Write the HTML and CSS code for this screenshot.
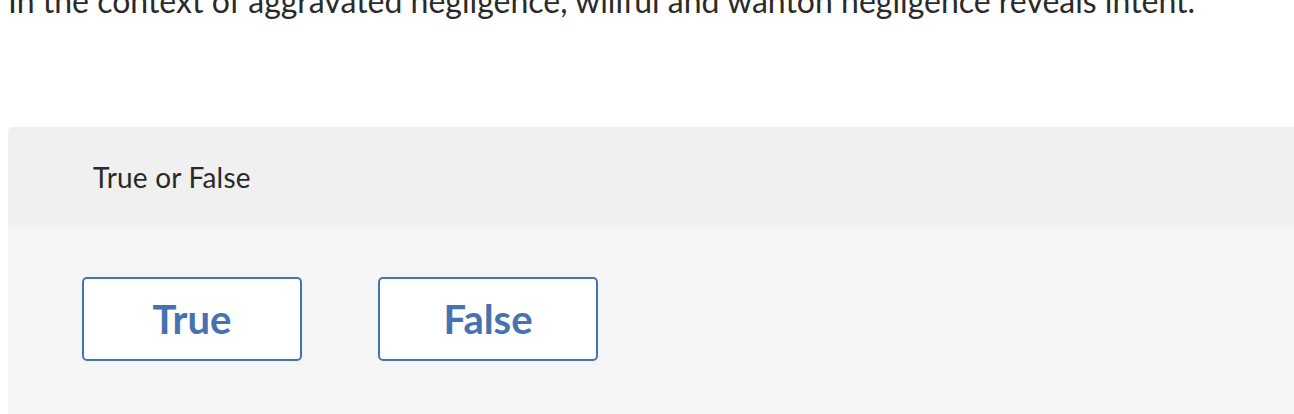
FILE: index.html
```html
<!DOCTYPE html>
<html lang="en">
<head>
    <meta charset="UTF-8">
    <meta name="viewport" content="width=device-width, initial-scale=1.0">
    <title>True or False</title>
    <link rel="stylesheet" href="styles.css">
</head>
<body>
    <main class="question">
        <p class="prompt">In the context of aggravated negligence, willful and wanton negligence reveals intent.</p>

        <section class="answer-panel">
            <div class="panel-header">True or False</div>
            <div class="panel-body">
                <button type="button" class="choice">True</button>
                <button type="button" class="choice">False</button>
            </div>
        </section>
    </main>
</body>
</html>
```

FILE: styles.css
```css
:root {
    --text-color: #2a2a2a;
    --choice-color: #4672b0;
    --header-bg: #f0f0f0;
    --body-bg: #f5f5f5;
}

* {
    margin: 0;
    padding: 0;
    box-sizing: border-box;
    font-family: 'Lato', 'Liberation Sans', sans-serif;
}

body {
    background-color: #fff;
    color: var(--text-color);
    overflow: hidden;
}

.question {
    padding-left: 8px;
}

/* the page is scrolled a little, so the prompt sits partly above the top */
.prompt {
    font-size: 32px;
    line-height: 38px;
    margin-top: -18px;
    margin-bottom: 107px;
    white-space: nowrap;
}

.answer-panel {
    border-top-left-radius: 5px;
    overflow: hidden;
}

.panel-header {
    display: flex;
    align-items: center;
    height: 100px;
    padding-left: 85px;
    background-color: var(--header-bg);
    font-size: 28px;
    letter-spacing: 0.2px;
}

.panel-body {
    display: flex;
    gap: 76px;
    padding: 50px 74px 80px;
    background-color: var(--body-bg);
}

.choice {
    width: 220px;
    height: 84px;
    background-color: #fff;
    border: 2px solid var(--choice-color);
    border-radius: 5px;
    color: var(--choice-color);
    font-size: 40px;
    font-weight: 700;
    cursor: pointer;
}

.choice:hover {
    background-color: #f7f9fd;
}
```
